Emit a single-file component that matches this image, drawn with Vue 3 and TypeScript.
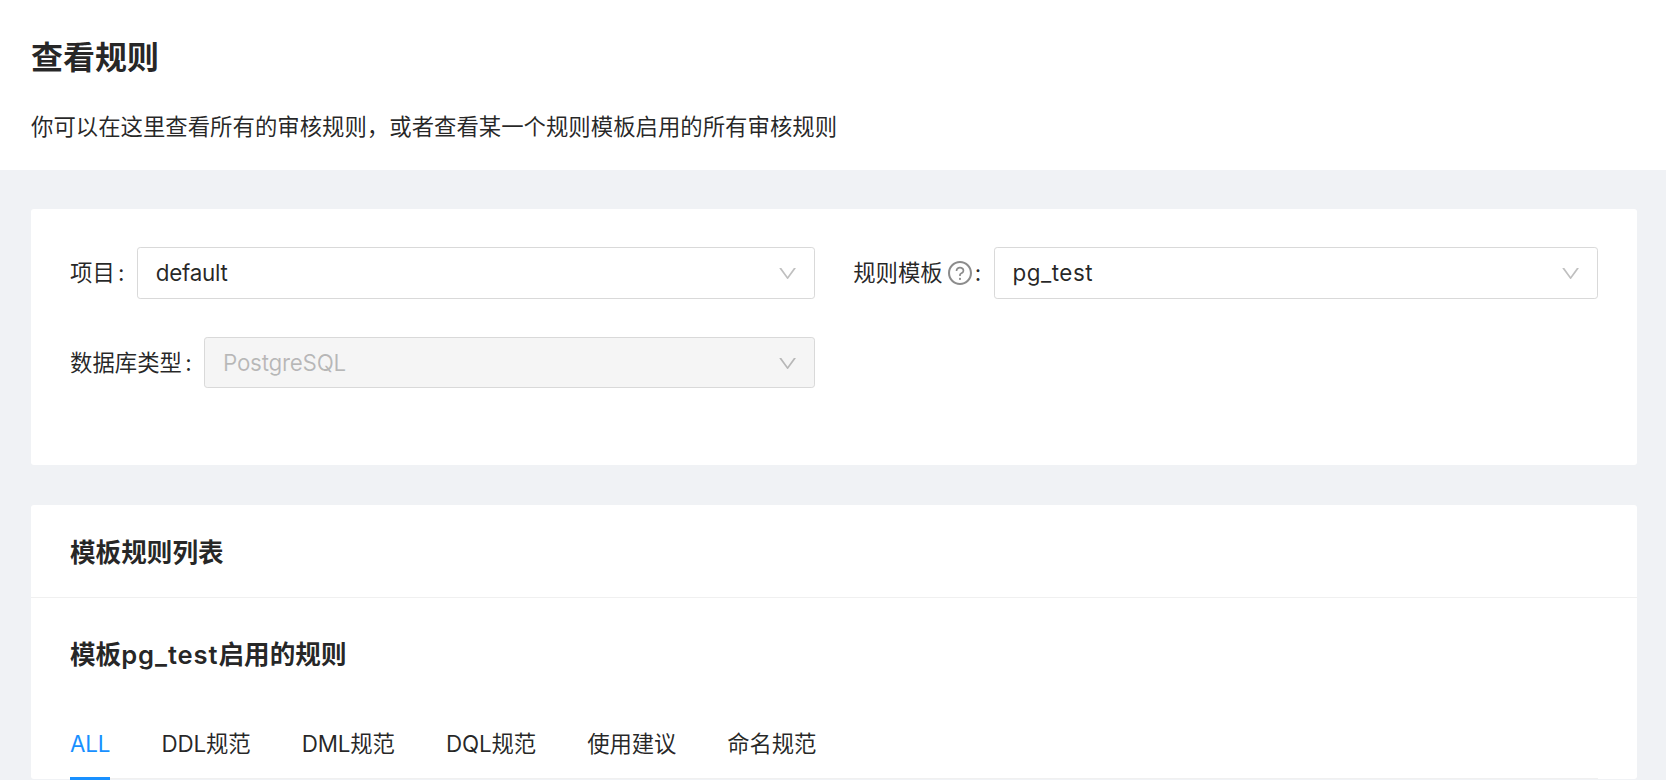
<script setup lang="ts">
const tabs: string[] = ['ALL', 'DDL规范', 'DML规范', 'DQL规范', '使用建议', '命名规范']
const downPath =
  'M884 256h-75c-5.1 0-9.9 2.5-12.9 6.6L512 654.2 227.9 262.6c-3-4.1-7.8-6.6-12.9-6.6h-75c-6.5 0-10.3 7.4-6.5 12.7l352.6 486.1c12.8 17.6 39 17.6 51.7 0l352.6-486.1c3.9-5.3.1-12.7-6.4-12.7z'
</script>

<template>
  <div class="page">
    <header class="page-header">
      <h1 class="page-title">查看规则</h1>
      <p class="page-desc">你可以在这里查看所有的审核规则，或者查看某一个规则模板启用的所有审核规则</p>
    </header>

    <main class="content">
      <section class="card filter-card">
        <div class="form-grid">
          <div class="form-item">
            <label class="form-label">项目<span class="colon">:</span></label>
            <div class="select">
              <span class="select-value">default</span>
              <svg class="arrow" viewBox="64 64 896 896"><path :d="downPath" /></svg>
            </div>
          </div>

          <div class="form-item">
            <label class="form-label">
              规则模板
              <svg class="help" viewBox="64 64 896 896">
                <path d="M512 64C264.6 64 64 264.6 64 512s200.6 448 448 448 448-200.6 448-448S759.4 64 512 64zm0 820c-205.4 0-372-166.6-372-372s166.6-372 372-372 372 166.6 372 372-166.6 372-372 372z" />
                <path d="M623.6 316.7C593.6 290.4 554 276 512 276s-81.6 14.5-111.6 40.7C369.2 344 352 380.7 352 420v7.6c0 4.4 3.6 8 8 8h48c4.4 0 8-3.6 8-8V420c0-44.1 43.1-80 96-80s96 35.9 96 80c0 31.1-22 59.6-56.1 72.7-21.2 8.1-39.2 22.3-52.1 40.9-13.1 19-19.9 41.8-19.9 65.9V620c0 4.4 3.6 8 8 8h48c4.4 0 8-3.6 8-8v-22.7a48.3 48.3 0 0 1 30.9-44.8c59-22.7 97.1-74.7 97.1-132.5.1-39.3-17.1-76-48.3-103.3zM472 732a40 40 0 1 0 80 0 40 40 0 1 0-80 0z" />
              </svg>
              <span class="colon">:</span>
            </label>
            <div class="select">
              <span class="select-value wide">pg_test</span>
              <svg class="arrow" viewBox="64 64 896 896"><path :d="downPath" /></svg>
            </div>
          </div>

          <div class="form-item">
            <label class="form-label">数据库类型<span class="colon">:</span></label>
            <div class="select disabled">
              <span class="select-value">PostgreSQL</span>
              <svg class="arrow" viewBox="64 64 896 896"><path :d="downPath" /></svg>
            </div>
          </div>
        </div>
      </section>

      <section class="card list-card">
        <div class="card-head">模板规则列表</div>
        <div class="card-body">
          <h2 class="sub-title">模板<span class="sub-name">pg_test</span>启用的规则</h2>
          <nav class="tabs">
            <span v-for="(tab, i) in tabs" :key="tab" class="tab" :class="{ active: i === 0 }">{{ tab }}</span>
          </nav>
        </div>
      </section>
    </main>
  </div>
</template>

<style>
html,
body {
  margin: 0;
  height: 100%;
  overflow: hidden;
}
</style>

<style scoped>
.page {
  height: 780px;
  overflow: hidden;
  background: #f0f2f5;
  color: rgba(0, 0, 0, 0.85);
  font-family: Inter, "Noto Sans CJK SC", sans-serif;
  font-size: 22.4px;
  line-height: 35.2px;
}

.page-header {
  box-sizing: border-box;
  height: 170px;
  padding: 32px 31px 0;
  background: #fff;
}

.page-title {
  margin: 0;
  font-size: 32px;
  line-height: 51.2px;
  font-weight: 600;
}

.page-desc {
  margin: 26px 0 0;
}

.content {
  padding: 39px 29px 0 31px;
}

.card {
  background: #fff;
  border-radius: 3px;
}

.filter-card {
  box-sizing: border-box;
  height: 256px;
  padding: 38.4px 39px;
}

.form-grid {
  display: grid;
  grid-template-columns: 1fr 1fr;
  column-gap: 38.4px;
  row-gap: 38.4px;
}

.form-item {
  display: flex;
  align-items: center;
  min-width: 0;
}

.form-label {
  display: flex;
  align-items: center;
  flex: none;
  white-space: nowrap;
}

.colon {
  margin: 0 12.8px 0 3.2px;
}

.help {
  flex: none;
  width: 24px;
  height: 24px;
  margin: 0 -0.8px 0 5.6px;
  fill: rgba(0, 0, 0, 0.45);
}

.select {
  box-sizing: border-box;
  flex: 1;
  display: flex;
  align-items: center;
  justify-content: space-between;
  height: 51.2px;
  padding: 0 16.6px 0 17.6px;
  background: #fff;
  border: 1.6px solid #d9d9d9;
  border-radius: 3.2px;
}

.select.disabled {
  background: #f5f5f5;
  color: rgba(0, 0, 0, 0.25);
}

.select-value {
  letter-spacing: -0.25px;
}

.select-value.wide {
  letter-spacing: 0.5px;
}

.arrow {
  flex: none;
  width: 19.2px;
  height: 19.2px;
  margin-top: 2px;
  fill: rgba(0, 0, 0, 0.25);
}

.list-card {
  margin-top: 40px;
}

.card-head {
  box-sizing: border-box;
  height: 93px;
  padding: 3px 39px 0;
  display: flex;
  align-items: center;
  font-size: 25.6px;
  font-weight: 600;
  border-bottom: 1.6px solid #f0f0f0;
}

.card-body {
  padding: 37px 39px 0;
}

.sub-title {
  margin: 0;
  font-size: 25.6px;
  line-height: 40px;
  font-weight: 600;
}

.sub-name {
  letter-spacing: 0.9px;
}

.tabs {
  display: flex;
  gap: 51.2px;
  margin-top: 51px;
  border-bottom: 1.6px solid #f0f0f0;
}

.tab {
  padding: 0 0 15.6px;
  margin-bottom: -1.6px;
  border-bottom: 3.2px solid transparent;
  letter-spacing: -0.15px;
}

.tab.active {
  color: #1890ff;
  border-bottom-color: #1890ff;
}
</style>
